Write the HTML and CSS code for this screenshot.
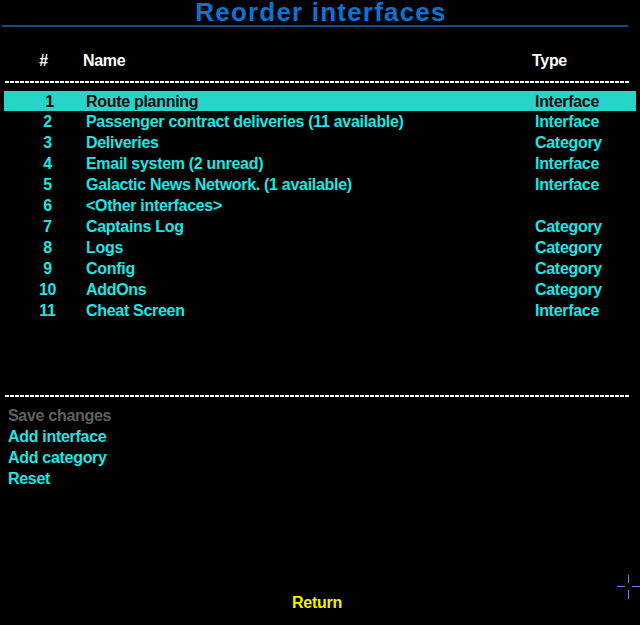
FILE: index.html
```html
<!DOCTYPE html>
<html>
<head>
<meta charset="utf-8">
<link rel="stylesheet" href="styles.css">
</head>
<body>
<div class="screen">
  <h1 class="title">Reorder interfaces</h1>
  <div class="title-rule"></div>
  <div class="head row">
    <span class="num">#</span>
    <span class="name">Name</span>
    <span class="type">Type</span>
  </div>
  <div class="dashes top"></div>
  <div class="list">
    <div class="row item selected"><span class="num">1</span><span class="name">Route planning</span><span class="type">Interface</span></div>
    <div class="row item"><span class="num">2</span><span class="name">Passenger contract deliveries (11 available)</span><span class="type">Interface</span></div>
    <div class="row item"><span class="num">3</span><span class="name">Deliveries</span><span class="type">Category</span></div>
    <div class="row item"><span class="num">4</span><span class="name">Email system (2 unread)</span><span class="type">Interface</span></div>
    <div class="row item"><span class="num">5</span><span class="name">Galactic News Network. (1 available)</span><span class="type">Interface</span></div>
    <div class="row item"><span class="num">6</span><span class="name">&lt;Other interfaces&gt;</span><span class="type"></span></div>
    <div class="row item"><span class="num">7</span><span class="name">Captains Log</span><span class="type">Category</span></div>
    <div class="row item"><span class="num">8</span><span class="name">Logs</span><span class="type">Category</span></div>
    <div class="row item"><span class="num">9</span><span class="name">Config</span><span class="type">Category</span></div>
    <div class="row item"><span class="num">10</span><span class="name">AddOns</span><span class="type">Category</span></div>
    <div class="row item"><span class="num">11</span><span class="name">Cheat Screen</span><span class="type">Interface</span></div>
  </div>
  <div class="dashes bottom"></div>
  <div class="actions">
    <div class="action disabled">Save changes</div>
    <div class="action">Add interface</div>
    <div class="action">Add category</div>
    <div class="action">Reset</div>
  </div>
  <div class="spacer"></div>
  <div class="footer">Return</div>
  <div class="cursor"></div>
</div>
</body>
</html>
```
FILE: styles.css
```css
html, body {
  margin: 0;
  padding: 0;
  background: #000;
}
.screen {
  position: relative;
  width: 640px;
  height: 625px;
  background: #000;
  font-family: "Liberation Sans", Arial, sans-serif;
  font-weight: bold;
  font-size: 16px;
  letter-spacing: -0.3px;
  color: #1ce6e6;
  display: flex;
  flex-direction: column;
  overflow: hidden;
}
.title {
  margin: 0;
  height: 25px;
  line-height: 25px;
  text-align: center;
  font-size: 26px;
  letter-spacing: 1.2px;
  color: #0a74d4;
  font-weight: bold;
  padding-left: 2px;
}
.title-rule {
  margin: 0 12px 0 2px;
  height: 2px;
  background: #0c4f8c;
}
.row {
  display: flex;
  align-items: center;
  height: 21px;
  line-height: 21px;
}
.head {
  margin-top: 21px;
  height: 24px;
  color: #fff;
}
.num {
  width: 93px;
  flex: none;
  text-align: center;
  box-sizing: border-box;
}
.row .num {
  width: 80px;
  padding-left: 15px;
}
.row .name {
  flex: 1;
  padding-left: 6px;
}
.row .type {
  width: 105px;
  flex: none;
}
.head .num { width: 72px; padding-left: 15px; }
.head .name { padding-left: 11px; }
.head .type { width: 108px; }
.dashes {
  height: 2px;
  margin: 0 11px 0 5px;
  background: repeating-linear-gradient(to right, #fff 0 4px, transparent 4px 5px);
}
.dashes.top { margin-top: 9px; }
.list {
  margin-top: 8px;
  height: 304px;
}
.item.selected {
  margin-left: 4px;
  margin-right: 4px;
  background: #26d4c8;
  color: #0a0a0a;
  height: 20px;
}
.item.selected .num { width: 76px; }
.item.selected .type { width: 101px; }
.actions {
  margin-top: 8px;
  padding-left: 8px;
}
.action {
  height: 21px;
  line-height: 21px;
}
.action.disabled { color: #606060; }
.spacer { flex: 1; }
.footer {
  text-align: center;
  color: #f0f000;
  height: 21px;
  line-height: 21px;
  margin-bottom: 12px;
  padding-right: 6px;
}
.cursor {
  position: absolute;
  left: 617px;
  top: 575px;
  width: 24px;
  height: 24px;
  background:
    linear-gradient(#7c7cf0, #7c7cf0) 11px 0 / 1px 8px no-repeat,
    linear-gradient(#7c7cf0, #7c7cf0) 11px 15px / 1px 9px no-repeat,
    linear-gradient(#7c7cf0, #7c7cf0) 0 11px / 8px 1px no-repeat,
    linear-gradient(#7c7cf0, #7c7cf0) 15px 11px / 9px 1px no-repeat;
}
```
